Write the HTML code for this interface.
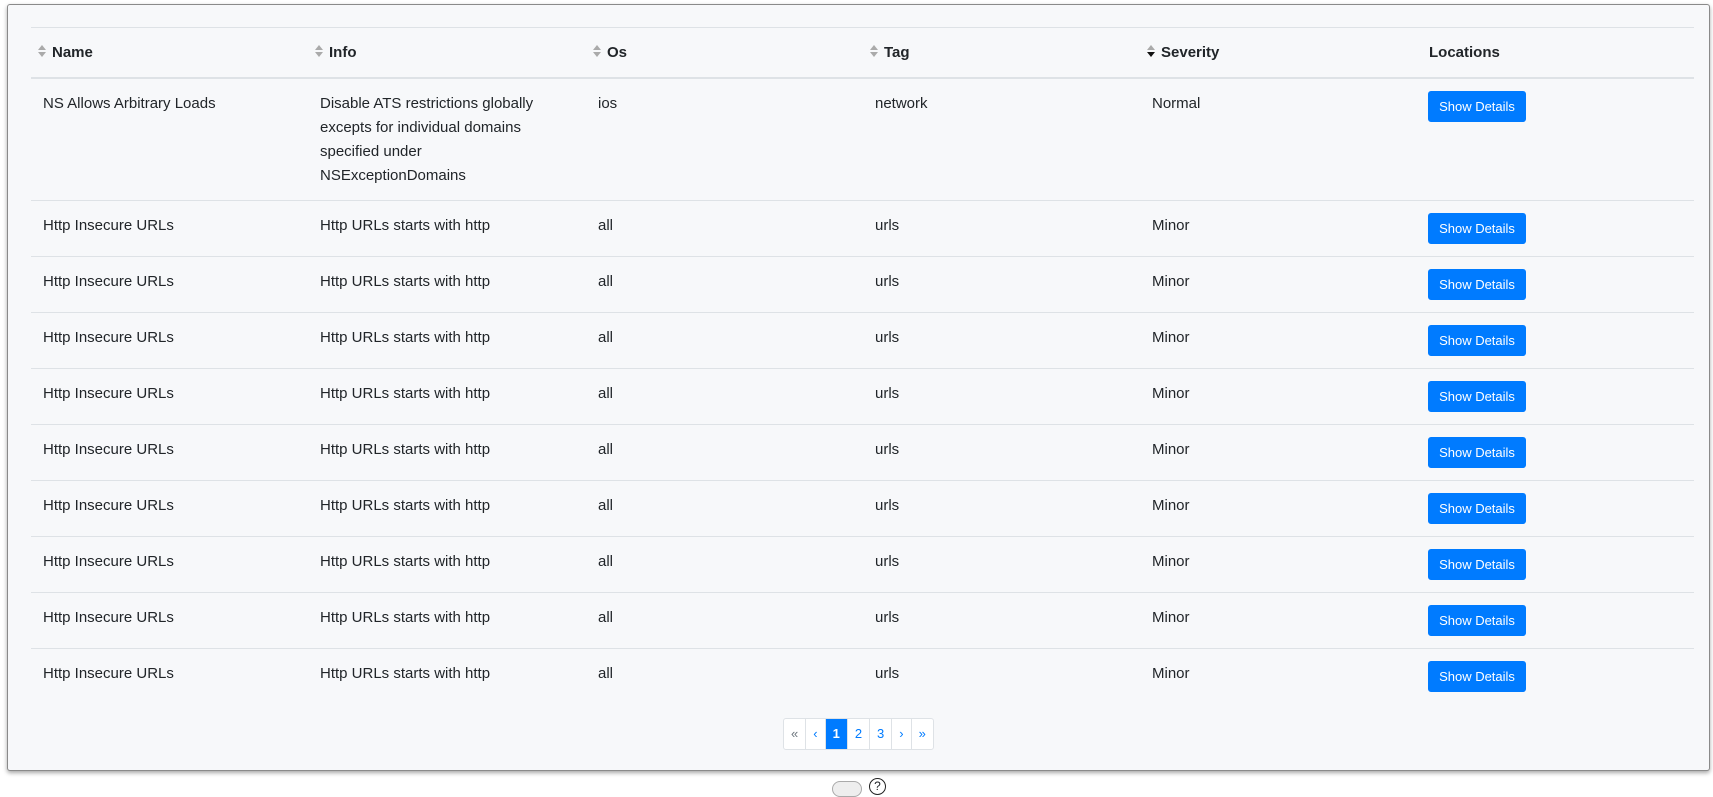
<!DOCTYPE html>
<html><head><meta charset="utf-8"><style>
html,body{margin:0;padding:0;background:#fff;width:1713px;height:789px;overflow:hidden;font-family:"Liberation Sans",Arial,sans-serif;color:#212529}
.panel{position:absolute;left:7px;top:4px;width:1701px;height:765px;background:#f7f8fa;border:1px solid #8a8a8a;border-radius:3px;box-shadow:0 2px 4px rgba(0,0,0,.35)}
table{position:absolute;left:23px;top:22px;width:1663px;border-collapse:collapse;table-layout:fixed;font-size:15px}
th{height:49px;text-align:left;font-weight:bold;padding:0 6px;border-top:1px solid #dee2e6;border-bottom:2px solid #dee2e6;vertical-align:middle;font-size:15px}
td{padding:13px 12px 0;height:42px;line-height:24px;vertical-align:top;border-top:1px solid #dee2e6}
td.i{padding-right:40px}
th .a{display:inline-block;width:10px;margin-right:5px;vertical-align:-1px}
.btn{display:inline-block;background:#007bff;color:#fff;font-size:13px;border-radius:3px;width:98px;height:31px;line-height:31px;text-align:center;margin-left:-1px;margin-top:-1px}
.pg{position:absolute;left:775px;top:713px;display:flex;border:1px solid #dee2e6;border-radius:3px;background:#fff;height:30px;font-size:13px}
.pg span{display:block;padding:0 7px;line-height:30px;color:#007bff;border-left:1px solid #dee2e6}
.pg span:first-child{border-left:none;color:#6c757d}
.pg span.act{background:#007bff;color:#fff;font-weight:bold}
</style></head><body>
<div class="panel">
<table>
<colgroup><col style="width:277px"><col style="width:278px"><col style="width:277px"><col style="width:277px"><col style="width:277px"><col></colgroup>
<tr>
<th><svg class="a" width="10" height="14" viewBox="0 0 10 14"><path d="M5 1L9 6H1z" fill="#aaa"/><path d="M5 13L9 8H1z" fill="#aaa"/></svg>Name</th>
<th><svg class="a" width="10" height="14" viewBox="0 0 10 14"><path d="M5 1L9 6H1z" fill="#aaa"/><path d="M5 13L9 8H1z" fill="#aaa"/></svg>Info</th>
<th><svg class="a" width="10" height="14" viewBox="0 0 10 14"><path d="M5 1L9 6H1z" fill="#aaa"/><path d="M5 13L9 8H1z" fill="#aaa"/></svg>Os</th>
<th><svg class="a" width="10" height="14" viewBox="0 0 10 14"><path d="M5 1L9 6H1z" fill="#aaa"/><path d="M5 13L9 8H1z" fill="#aaa"/></svg>Tag</th>
<th><svg class="a" width="10" height="14" viewBox="0 0 10 14"><path d="M5 1L9 6H1z" fill="#aaa"/><path d="M5 13L9 8H1z" fill="#111"/></svg>Severity</th>
<th style="padding-left:12px">Locations</th>
</tr>
<tr><td style="height:108px">NS Allows Arbitrary Loads</td><td class="i">Disable ATS restrictions globally excepts for individual domains specified under NSExceptionDomains</td><td>ios</td><td>network</td><td>Normal</td><td><span class="btn">Show Details</span></td></tr>
<tr><td>Http Insecure URLs</td><td>Http URLs starts with http</td><td>all</td><td>urls</td><td>Minor</td><td><span class="btn">Show Details</span></td></tr>
<tr><td>Http Insecure URLs</td><td>Http URLs starts with http</td><td>all</td><td>urls</td><td>Minor</td><td><span class="btn">Show Details</span></td></tr>
<tr><td>Http Insecure URLs</td><td>Http URLs starts with http</td><td>all</td><td>urls</td><td>Minor</td><td><span class="btn">Show Details</span></td></tr>
<tr><td>Http Insecure URLs</td><td>Http URLs starts with http</td><td>all</td><td>urls</td><td>Minor</td><td><span class="btn">Show Details</span></td></tr>
<tr><td>Http Insecure URLs</td><td>Http URLs starts with http</td><td>all</td><td>urls</td><td>Minor</td><td><span class="btn">Show Details</span></td></tr>
<tr><td>Http Insecure URLs</td><td>Http URLs starts with http</td><td>all</td><td>urls</td><td>Minor</td><td><span class="btn">Show Details</span></td></tr>
<tr><td>Http Insecure URLs</td><td>Http URLs starts with http</td><td>all</td><td>urls</td><td>Minor</td><td><span class="btn">Show Details</span></td></tr>
<tr><td>Http Insecure URLs</td><td>Http URLs starts with http</td><td>all</td><td>urls</td><td>Minor</td><td><span class="btn">Show Details</span></td></tr>
<tr><td>Http Insecure URLs</td><td>Http URLs starts with http</td><td>all</td><td>urls</td><td>Minor</td><td><span class="btn">Show Details</span></td></tr>
</table>
<div class="pg"><span>«</span><span>‹</span><span class="act">1</span><span>2</span><span>3</span><span>›</span><span>»</span></div>
</div>
<div style="position:absolute;left:832px;top:781px;width:28px;height:14px;border:1px solid #aaa;border-radius:8px;background:#eee"></div>
<div style="position:absolute;left:869px;top:778px;width:15px;height:15px;border:1.5px solid #222;border-radius:50%;font-size:12px;text-align:center;line-height:15px">?</div>
</body></html>
